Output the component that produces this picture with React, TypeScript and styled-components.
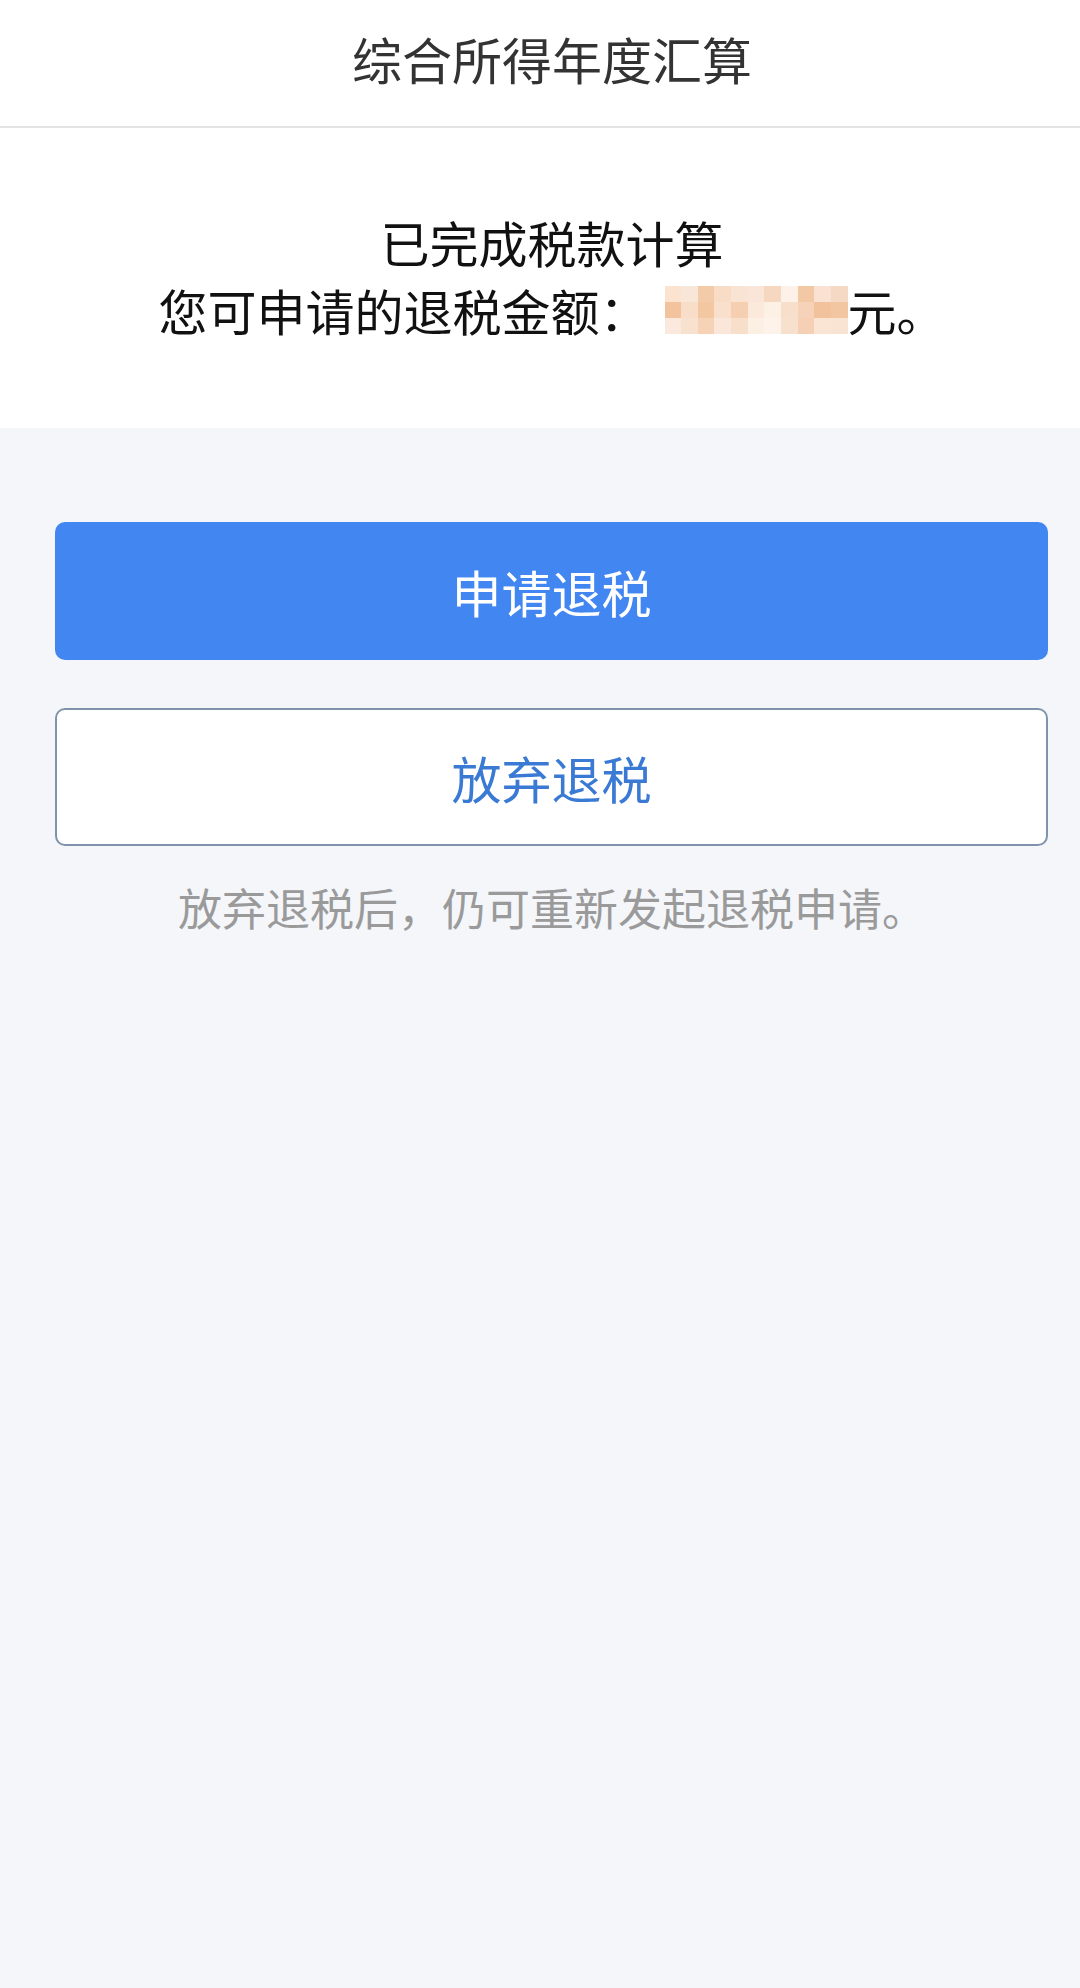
import React from 'react';
import styled, { createGlobalStyle, css } from 'styled-components';

const GlobalStyle = createGlobalStyle`
    html, body {
        margin: 0;
        padding: 0;
        background-color: #f4f6fa;
    }
    body {
        font-family: "Noto Sans CJK SC", "Noto Sans", sans-serif;
    }
`;

const Page = styled.div`
    width: 1080px;
    min-height: 1988px;
    background-color: #f4f6fa;
    display: flex;
    flex-direction: column;
`;

const Header = styled.header`
    height: 128px;
    background-color: #ffffff;
    border-bottom: 2px solid #e3e3e3;
    display: flex;
    align-items: center;
    justify-content: center;
    font-size: 50px;
    color: #333333;
    padding: 0 0 10px 24px;
    box-sizing: border-box;
`;

const Summary = styled.section`
    background-color: #ffffff;
    height: 300px;
    display: flex;
    flex-direction: column;
    align-items: center;
    justify-content: center;
    padding: 0 0 5px 24px;
    box-sizing: border-box;
    color: #111111;
    font-size: 49px;
    line-height: 68px;
`;

const AmountLine = styled.div`
    display: flex;
    align-items: center;
`;

const Mosaic = styled.div`
    width: 183px;
    height: 48px;
    margin-left: 16px;
    display: grid;
    grid-template-columns: repeat(11, 1fr);
    grid-template-rows: repeat(3, 1fr);
`;

const Actions = styled.div`
    padding: 94px 32px 0 55px;
    display: flex;
    flex-direction: column;
    gap: 48px;
`;

const Button = styled.button<{ primary?: boolean }>`
    height: 138px;
    border-radius: 10px;
    font-family: "Noto Sans CJK SC", "Noto Sans", sans-serif;
    font-size: 50px;
    display: flex;
    align-items: center;
    justify-content: center;
    box-sizing: border-box;
    cursor: pointer;
    ${props => props.primary
        ? css`
            background-color: #4286f1;
            color: #ffffff;
            border: none;
        `
        : css`
            background-color: #ffffff;
            color: #3b7ad4;
            border: 2px solid #7f94ab;
        `}
`;

const Hint = styled.p`
    margin: 29px 0 0 0;
    padding-left: 24px;
    text-align: center;
    font-size: 44px;
    color: #9a9a9a;
`;

const mosaicColors = [
    '#fbe3d0', '#f8e6d8', '#f4cba8', '#f8dcc6', '#f9e4d4', '#fae6d8', '#f6d7c0', '#fdf1e8', '#f3c9a5', '#f9e2d1', '#f6d9c4',
    '#f2c39c', '#f8ddc8', '#f3c7a2', '#f9e0cc', '#f5cfb0', '#fbe9dc', '#fdf1e6', '#f8dfcb', '#f6d3b8', '#f1c29c', '#f3c6a2',
    '#fbe9de', '#f9e1cf', '#f6d3b6', '#fae7da', '#f8dfcc', '#fcefe4', '#fdf3ea', '#f8e0cf', '#f5d0b4', '#fae4d4', '#f9e3d3',
];

export default function App() {
    return (
        <Page>
            <GlobalStyle />
            <Header>综合所得年度汇算</Header>
            <Summary>
                <div>已完成税款计算</div>
                <AmountLine>
                    <span>您可申请的退税金额：</span>
                    <Mosaic>
                        {mosaicColors.map((c, i) => (
                            <div key={i} style={{ backgroundColor: c }} />
                        ))}
                    </Mosaic>
                    <span>元。</span>
                </AmountLine>
            </Summary>
            <Actions>
                <Button primary>申请退税</Button>
                <Button>放弃退税</Button>
            </Actions>
            <Hint>放弃退税后，仍可重新发起退税申请。</Hint>
        </Page>
    );
}
